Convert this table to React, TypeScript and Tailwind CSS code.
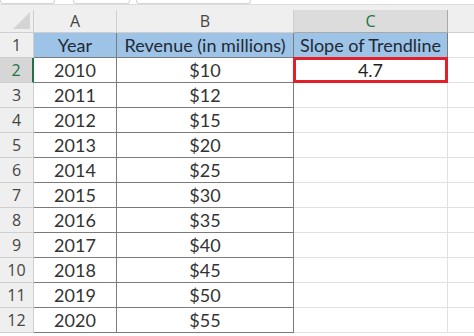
const rows = [
  ['2010', '$10'],
  ['2011', '$12'],
  ['2012', '$15'],
  ['2013', '$20'],
  ['2014', '$25'],
  ['2015', '$30'],
  ['2016', '$35'],
  ['2017', '$40'],
  ['2018', '$45'],
  ['2019', '$50'],
  ['2020', '$55'],
];

const cellFont = { fontFamily: 'Lato, "Open Sans", sans-serif' };
const headFont = { fontFamily: '"Open Sans", sans-serif' };

export default function App() {
  return (
    <div className="w-[474px] h-[336px] overflow-hidden bg-white">
      {/* ribbon remnants */}
      <div className="flex h-[4px] gap-[6px] bg-white">
        <div className="w-[55px] rounded-b-[3px] border border-t-0 border-[#d6d6d6]" />
        <div className="ml-[12px] w-[57px] rounded-b-[3px] border border-t-0 border-[#d6d6d6]" />
        <div className="w-[115px] rounded-b-[3px] border border-t-0 border-[#d6d6d6]" />
      </div>
      <div className="h-[6px] border-t border-[#dcdcdc] bg-[#efefef]" />

      <div
        className="grid grid-cols-[34px_83px_177px_154px_1fr] grid-rows-[23px_repeat(12,25px)] text-[18px] leading-none text-[#333]"
        style={cellFont}
      >
        {/* column headers */}
        <div className="relative bg-[#efefef] border-b border-r border-[#cfcfcf]">
          <svg className="absolute right-[3px] bottom-[3px]" width="17" height="17" viewBox="0 0 17 17">
            <polygon points="17,0 17,17 0,17" fill="#d4d4d4" />
          </svg>
        </div>
        <div className="flex items-center justify-center bg-[#efefef] border-b border-r border-[#cfcfcf] text-[16px] text-[#444]" style={headFont}>A</div>
        <div className="flex items-center justify-center bg-[#efefef] border-b border-r border-[#cfcfcf] text-[16px] text-[#444]" style={headFont}>B</div>
        <div className="flex items-center justify-center bg-[#dcdcdc] border-b border-r border-[#a9a9a9] text-[16px] text-[#217346]" style={headFont}>C</div>
        <div className="bg-[#efefef] border-b border-[#cfcfcf]" />

        {/* row 1 */}
        <div className="flex items-center justify-center bg-[#efefef] border-b border-r border-[#cfcfcf] text-[16px] text-[#444]" style={headFont}>1</div>
        <div className="flex items-center justify-center bg-[#9dc3e6] border-b border-r border-[#7b7b7b] text-[#1f2a36]">Year</div>
        <div className="flex items-center justify-center bg-[#9dc3e6] border-b border-r border-[#7b7b7b] text-[#1f2a36]">Revenue (in millions)</div>
        <div className="flex items-center justify-center bg-[#9dc3e6] border-b border-r border-[#7b7b7b] text-[#1f2a36] whitespace-nowrap">Slope of Trendline</div>
        <div className="border-b border-[#e1e1e1]" />

        {rows.map(([year, rev], i) => {
          const n = i + 2;
          const selected = n === 2;
          return [
            <div
              key={`h${n}`}
              className={
                selected
                  ? 'flex items-center justify-center bg-[#d6d6d6] border-b border-r-2 border-b-[#cfcfcf] border-r-[#217346] text-[16px] text-[#217346]'
                  : 'flex items-center justify-center bg-[#efefef] border-b border-r border-[#cfcfcf] text-[16px] text-[#444]'
              }
              style={headFont}
            >
              {n}
            </div>,
            <div key={`a${n}`} className="flex items-center justify-center border-b border-r border-[#7b7b7b]">{year}</div>,
            <div key={`b${n}`} className="flex items-center justify-center border-b border-r border-[#7b7b7b]">{rev}</div>,
            selected ? (
              <div key={`c${n}`} className="-mt-px -ml-px flex items-center justify-center border-[3px] border-[#e2202a] text-[#1f1f1f]">4.7</div>
            ) : (
              <div key={`c${n}`} className="border-b border-r border-[#e1e1e1]" />
            ),
            <div key={`d${n}`} className="border-b border-[#e1e1e1]" />,
          ];
        })}
      </div>
    </div>
  );
}
